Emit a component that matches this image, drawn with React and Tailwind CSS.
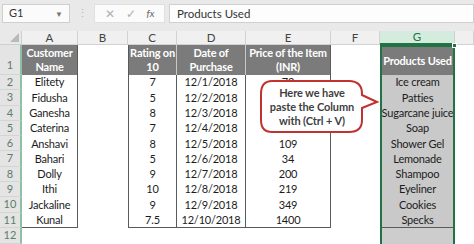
const COLS = ['A', 'B', 'C', 'D', 'E', 'F', 'G', 'H'];

const ROWS = [
  ['Elitety', '7', '12/1/2018', '72', 'Ice cream'],
  ['Fidusha', '5', '12/2/2018', '', 'Patties'],
  ['Ganesha', '8', '12/3/2018', '', 'Sugarcane juice'],
  ['Caterina', '7', '12/4/2018', '87', 'Soap'],
  ['Anshavi', '8', '12/5/2018', '109', 'Shower Gel'],
  ['Bahari', '5', '12/6/2018', '34', 'Lemonade'],
  ['Dolly', '9', '12/7/2018', '200', 'Shampoo'],
  ['Ithi', '10', '12/8/2018', '219', 'Eyeliner'],
  ['Jackaline', '9', '12/9/2018', '349', 'Cookies'],
  ['Kunal', '7.5', '12/10/2018', '1400', 'Specks'],
];

const rowHead = 'flex items-center justify-center bg-[#e4e4e4] border-b border-[#d4d4d4] border-r-2 border-r-[#8fbfa3] text-[11px] text-[#5d7d6b]';
const darkHead = 'flex flex-col items-center justify-center bg-[#7b7b7b] text-white font-bold text-[11px] tracking-[-0.2px] leading-[14px] text-center whitespace-nowrap overflow-visible';
const cell = 'flex items-center justify-center text-[11px] tracking-[-0.2px] text-[#1c1c1c] whitespace-nowrap';

export default function App() {
  return (
    <div className="relative w-[474px] h-[244px] overflow-hidden bg-white" style={{ fontFamily: 'Lato, "Open Sans", sans-serif' }}>
      {/* formula bar */}
      <div className="h-[31px] bg-[#e9e9e9] flex items-start pt-[4px] pl-[2px] gap-[4px]">
        <div className="w-[68px] h-[19px] bg-[#fbfbfb] border border-[#cfcfcf] flex items-center justify-between px-[6px] text-[11px] text-[#333]">
          <span>G1</span>
          <span className="text-[8px] text-[#777]">▼</span>
        </div>
        <div className="w-[16px] h-[19px] flex items-center justify-center text-[#b5b5b5] text-[11px]">⋮</div>
        <div className="w-[71px] h-[19px] bg-[#fbfbfb] border border-[#e0e0e0] flex items-center justify-around px-[4px] text-[#b0b0b0] text-[12px]">
          <span>✕</span>
          <span>✓</span>
          <span className="italic text-[10px] text-[#666]">fx</span>
        </div>
        <div className="flex-1 h-[19px] bg-[#fdfdfd] border border-[#d0d0d0] flex items-center pl-[7px] text-[11.5px] text-[#333]">
          Products Used
        </div>
      </div>

      {/* sheet grid */}
      <div className="grid grid-cols-[22px_56px_50px_49px_69px_85px_49px_75px_19px] grid-rows-[14px_30px_repeat(10,15.3px)_16px]">
        <div className="relative bg-[#e9e9e9] border-r border-b border-[#cfcfcf]">
          <div className="absolute right-[2px] bottom-[2px] w-0 h-0 border-l-[9px] border-l-transparent border-b-[9px] border-b-[#b9b9b9]" />
        </div>
        {COLS.map((c) =>
          c === 'G' ? (
            <div key={c} className="flex items-center justify-center bg-[#d3ecdd] border-r border-[#cfcfcf] border-b-2 border-b-[#217346] text-[11.5px] text-[#217346]">
              {c}
            </div>
          ) : (
            <div key={c} className="flex items-center justify-center bg-[#f0f0f0] border-r border-b border-[#d2d2d2] text-[11.5px] text-[#444]">
              {c === 'H' ? '' : c}
            </div>
          )
        )}

        {/* row 1 */}
        <div className={rowHead + ' items-end pb-[1px]'}>1</div>
        <div className={darkHead + ' border-r border-[#5a5a5a]'}>
          <span>Customer</span>
          <span>Name</span>
        </div>
        <div />
        <div className={darkHead + ' border-l border-r border-l-[#5a5a5a] border-r-[#c8c8c8]'}>
          <span>Rating on</span>
          <span>10</span>
        </div>
        <div className={darkHead + ' border-r border-[#c8c8c8]'}>
          <span>Date of</span>
          <span>Purchase</span>
        </div>
        <div className={darkHead + ' border-r border-[#5a5a5a]'}>
          <span>Price of the Item</span>
          <span>(INR)</span>
        </div>
        <div />
        <div className={darkHead + ' pt-[2px]'}>
          <span>Products Used</span>
        </div>
        <div />

        {ROWS.map((r, i) => {
          const last = i === ROWS.length - 1;
          const bottom = last ? ' border-b border-b-[#5a5a5a]' : '';
          return [
            <div key={'h' + i} className={rowHead}>{i + 2}</div>,
            <div key={'a' + i} className={cell + ' border-r border-[#5a5a5a]' + bottom}>{r[0]}</div>,
            <div key={'b' + i} />,
            <div key={'c' + i} className={cell + ' border-l border-r border-[#5a5a5a]' + bottom}>{r[1]}</div>,
            <div key={'d' + i} className={cell + ' border-r border-[#5a5a5a]' + bottom}>{r[2]}</div>,
            <div key={'e' + i} className={cell + ' border-r border-[#5a5a5a]' + bottom}>{r[3]}</div>,
            <div key={'f' + i} />,
            <div key={'g' + i} className={cell + ' bg-[#c9c9c9]' + bottom}>{r[4]}</div>,
            <div key={'x' + i} />,
          ];
        })}

        {/* row 12 */}
        <div className={rowHead}>12</div>
        <div />
        <div />
        <div />
        <div />
        <div />
        <div />
        <div className="bg-[#cdcdcd]" />
        <div />
      </div>

      {/* selection outline G1:G12 */}
      <div className="absolute left-[380px] top-[45px] w-[75px] h-[202px] border-2 border-[#217346]" />
      <div className="absolute left-[452px] top-[43px] w-[5px] h-[5px] bg-[#217346] border border-white" />

      {/* callout */}
      <svg className="absolute left-[258px] top-[78px]" width="124" height="58" viewBox="0 0 124 58">
        <path
          d="M14 3 H91 Q104 3 104 16 V17 L119 24 L104 30 V42 Q104 54 91 54 H14 Q3 54 3 42 V16 Q3 3 14 3 Z"
          fill="white"
          stroke="#c0322f"
          strokeWidth="2"
        />
      </svg>
      <div className="absolute left-[262px] top-[86px] w-[100px] flex flex-col items-center text-[11px] tracking-[-0.1px] leading-[14px] font-bold text-[#3f3f3f]">
        <span>Here we have</span>
        <span>paste the Column</span>
        <span>with (Ctrl + V)</span>
      </div>
    </div>
  );
}
